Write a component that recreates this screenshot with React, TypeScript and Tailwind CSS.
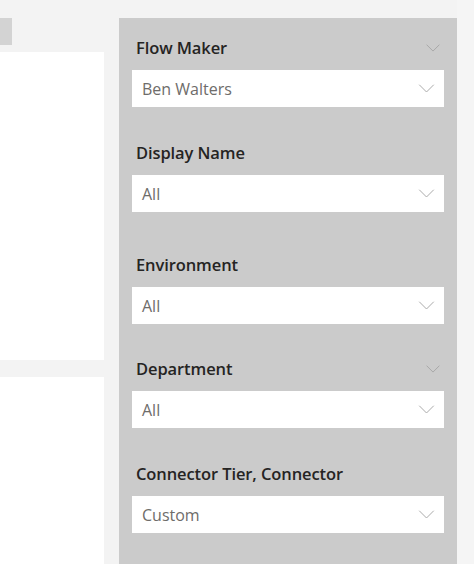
import React from "react";

const Chevron = ({ className }: { className: string }) => (
  <svg viewBox="0 0 16 9" className={className} fill="none">
    <path d="M1 1 L8 8 L15 1" stroke="currentColor" strokeWidth="1" strokeLinecap="round" strokeLinejoin="round" />
  </svg>
);

const Slicer = ({
  title,
  value,
  mt,
  headerChevron,
}: {
  title: string;
  value: string;
  mt: string;
  headerChevron?: boolean;
}) => (
  <div className={mt}>
    <div className="flex h-[22px] items-center justify-between pl-[4px] pr-[4px]">
      <span className="text-[16.5px] font-semibold text-[#252423] tracking-[-0.1px]">{title}</span>
      {headerChevron && <Chevron className="h-[8px] w-[14px] text-[#a3a3a3]" />}
    </div>
    <div className="mt-[11px] flex h-[37px] items-center justify-between bg-white pl-[10px] pr-[9px]">
      <span className="text-[16px] text-[#6e6c6a]">{value}</span>
      <Chevron className="h-[9px] w-[17px] text-[#aaaaaa]" />
    </div>
  </div>
);

export default function App() {
  return (
    <div
      className="flex h-[564px] w-[474px] overflow-hidden bg-[#f3f3f3]"
      style={{ fontFamily: '"Open Sans", "Noto Sans", sans-serif' }}
    >
      <div className="flex w-[104px] shrink-0 flex-col">
        <div className="mt-[18px] h-[27px] w-[12px] bg-[#d3d3d3]" />
        <div className="mt-[7px] h-[308px] bg-white" />
        <div className="mt-[17px] flex-1 bg-white" />
      </div>
      <div className="ml-[15px] mt-[18px] w-[338px] shrink-0 bg-[#cbcbcb] px-[13px] pt-[19px]">
        <Slicer title="Flow Maker" value="Ben Walters" mt="mt-0" headerChevron />
        <Slicer title="Display Name" value="All" mt="mt-[35px]" />
        <Slicer title="Environment" value="All" mt="mt-[42px]" />
        <Slicer title="Department" value="All" mt="mt-[34px]" headerChevron />
        <Slicer title="Connector Tier, Connector" value="Custom" mt="mt-[35px]" />
      </div>
      <div className="flex-1 bg-[#f5f5f5]" />
    </div>
  );
}
